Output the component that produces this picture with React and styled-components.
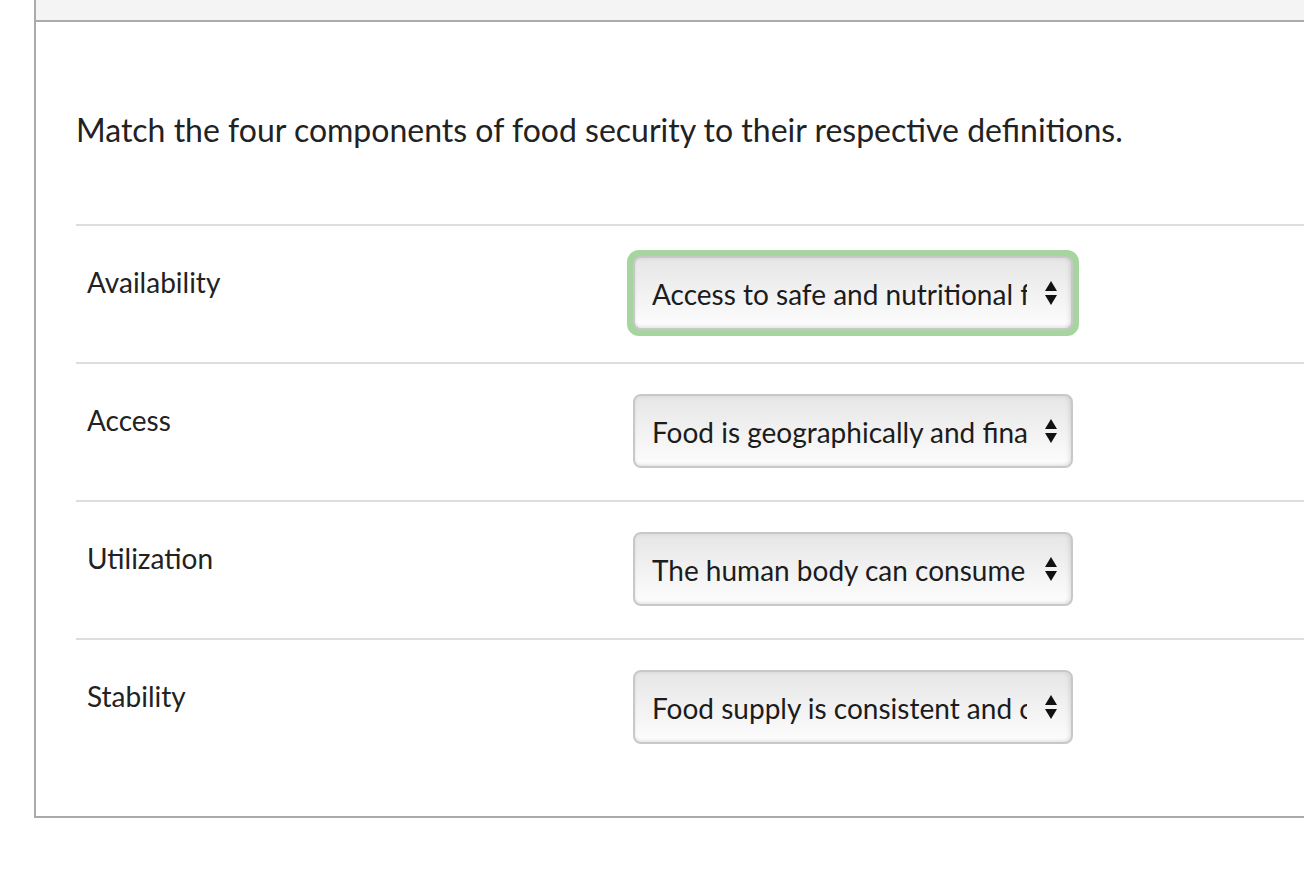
import React from "react";
import styled, { createGlobalStyle } from "styled-components";

const Global = createGlobalStyle`
  html, body { margin: 0; padding: 0; background: #fff; overflow: hidden; }
  body { font-family: Lato, "Noto Sans", sans-serif; color: #222; }
`;

const Page = styled.div`
  padding-left: 34px;
  width: 1400px;
`;

const Panel = styled.div`
  border-left: 2px solid #aaa;
  border-bottom: 2px solid #aaa;
  width: 1360px;
`;

const Header = styled.div`
  height: 20px;
  background: #f4f4f4;
  border-bottom: 2px solid #aaa;
`;

const Body = styled.div`
  padding: 88px 0 40px 40px;
`;

const Question = styled.div`
  font-size: 32px;
  line-height: 40px;
  margin: 0 0 74px 0;
`;

const Row = styled.div`
  display: flex;
  align-items: flex-start;
  border-top: 2px solid #ddd;
  height: 136px;
`;

const Label = styled.div`
  width: 546px;
  padding: 39px 0 0 11px;
  font-size: 28px;
  line-height: 34px;
`;

const Ring = styled.div`
  margin-top: ${(p) => (p.$focused ? "24px" : "30px")};
  margin-left: ${(p) => (p.$focused ? "-6px" : "0")};
  padding: ${(p) => (p.$focused ? "4px" : "0")};
  border: ${(p) => (p.$focused ? "2px solid #a6d59f" : "none")};
  border-radius: 12px;
  background: ${(p) => (p.$focused ? "#a6d59f" : "transparent")};
`;

const Control = styled.div`
  box-sizing: border-box;
  width: 440px;
  height: 74px;
  border: 2px solid #c8c8c8;
  border-radius: 8px;
  background: linear-gradient(#e6e6e6, #fdfdfd);
  box-shadow: inset 0 -2px 3px rgba(0, 0, 0, 0.06), inset -2px 0 4px rgba(0, 0, 0, 0.08);
  display: flex;
  align-items: center;
  padding: 0 14px 0 17px;
`;

const Value = styled.div`
  flex: 1;
  overflow: hidden;
  white-space: nowrap;
  font-size: 28px;
  line-height: 34px;
  padding-top: 2px;
  color: #1c1c1c;
  margin-right: 18px;
`;

const Arrows = () => (
  <svg width="12" height="26" viewBox="0 0 12 26">
    <path d="M6 1 L12 11 L0 11 Z" fill="#111" />
    <path d="M0 15 L12 15 L6 25 Z" fill="#111" />
  </svg>
);

const rows = [
  ["Availability", "Access to safe and nutritional food", true],
  ["Access", "Food is geographically and financially accessible", false],
  ["Utilization", "The human body can consume and use nutrients", false],
  ["Stability", "Food supply is consistent and constant", false],
];

export default function App() {
  return (
    <Page>
      <Global />
      <Panel>
        <Header />
        <Body>
          <Question>Match the four components of food security to their respective definitions.</Question>
          {rows.map(([label, value, focused]) => (
            <Row key={label}>
              <Label>{label}</Label>
              <Ring $focused={focused}>
                <Control>
                  <Value>{value}</Value>
                  <Arrows />
                </Control>
              </Ring>
            </Row>
          ))}
        </Body>
      </Panel>
    </Page>
  );
}
